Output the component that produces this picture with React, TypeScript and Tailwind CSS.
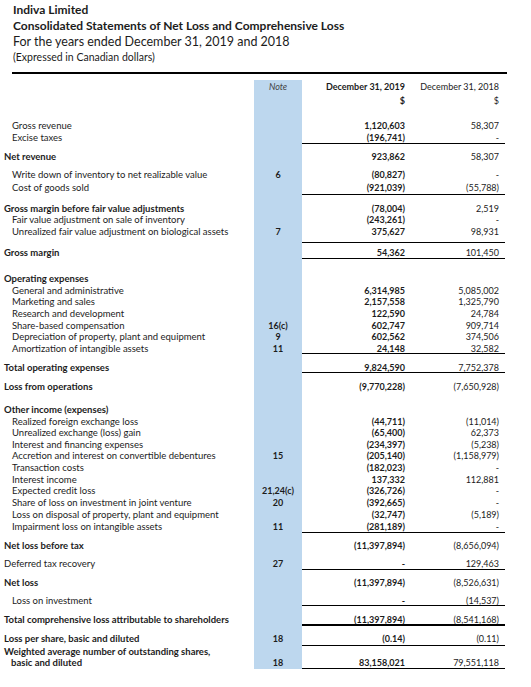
import React from "react";

const BLUE = "bg-[#bdd7ee]";

type RowProps = {
  label?: React.ReactNode;
  note?: string;
  v1?: string;
  v2?: string;
  bold?: boolean;
  sub?: boolean;
  h?: string;
  line?: string;
};

function Row({ label, note, v1, v2, bold, sub, h = "h-[12px]", line = "" }: RowProps) {
  return (
    <div className={`flex ${h}`}>
      <div
        className={`w-[254px] text-[9.5px] leading-[12px] whitespace-nowrap ${bold ? "font-bold pl-[4px]" : ""} ${sub ? "pl-[12px]" : ""}`}
      >
        {label}
      </div>
      <div className={`w-[48px] ${BLUE} text-center font-bold leading-[12px]`}>{note}</div>
      <div className={`flex w-[203px] ${line}`}>
        <div className="w-[103px] text-right font-bold leading-[12px]">{v1}</div>
        <div className="w-[94px] text-right leading-[12px]">{v2}</div>
      </div>
    </div>
  );
}

function Gap({ h }: { h: string }) {
  return (
    <div className={`flex ${h}`}>
      <div className="w-[254px]" />
      <div className={`w-[48px] ${BLUE}`} />
    </div>
  );
}

const L1 = "border-b border-black";
const L2 = "border-b-2 border-black";

export default function App() {
  return (
    <div
      className="w-[531px] h-[687px] bg-white text-[#1c1c1c] overflow-hidden"
      style={{ fontFamily: "Lato, 'Liberation Sans', sans-serif" }}
    >
      <div className="pl-[13px] pt-[2px]">
        <div className="h-[16px] leading-[16px] text-[12px] font-bold">Indiva Limited</div>
        <div className="h-[16px] leading-[16px] text-[12px] font-bold">
          Consolidated Statements of Net Loss and Comprehensive Loss
        </div>
        <div className="h-[16px] leading-[16px] text-[12.5px]">For the years ended December 31, 2019 and 2018</div>
        <div className="h-[14px] leading-[14px] text-[10.5px]">(Expressed in Canadian dollars)</div>
      </div>
      <div className="ml-[12px] mt-[8px] w-[495px] h-[2px] bg-black" />
      <div className="mt-[6px] text-[9px]">
        <div className="flex h-[13px]">
          <div className="w-[254px]" />
          <div className={`w-[48px] ${BLUE} text-center italic text-[#444] leading-[13px]`}>Note</div>
          <div className="flex w-[203px]">
            <div className="w-[103px] text-right font-bold leading-[13px]">December 31, 2019</div>
            <div className="w-[94px] text-right leading-[13px]">December 31, 2018</div>
          </div>
        </div>
        <div className="flex h-[15px]">
          <div className="w-[254px]" />
          <div className={`w-[48px] ${BLUE}`} />
          <div className="flex w-[203px]">
            <div className="w-[103px] text-right font-bold leading-[15px]">$</div>
            <div className="w-[94px] text-right leading-[15px]">$</div>
          </div>
        </div>
        <Gap h="h-[12px]" />
        <Row sub label="Gross revenue" v1="1,120,603" v2="58,307" />
        <Row sub label="Excise taxes" v1="(196,741)" v2="-" line={L1} />
        <Gap h="h-[7px]" />
        <Row bold label="Net revenue" v1="923,862" v2="58,307" />
        <Gap h="h-[6px]" />
        <Row sub label="Write down of inventory to net realizable value" note="6" v1="(80,827)" v2="-" h="h-[13px]" />
        <Row sub label="Cost of goods sold" v1="(921,039)" v2="(55,788)" h="h-[13px]" line={L1} />
        <Gap h="h-[8px]" />
        <Row bold label="Gross margin before fair value adjustments" v1="(78,004)" v2="2,519" h="h-[11px]" />
        <Row sub label="Fair value adjustment on sale of inventory" v1="(243,261)" v2="-" />
        <Row
          sub
          label="Unrealized fair value adjustment on biological assets"
          note="7"
          v1="375,627"
          v2="98,931"
          h="h-[17px]"
          line={L1}
        />
        <Gap h="h-[4px]" />
        <Row bold label="Gross margin" v1="54,362" v2="101,450" line={L1} />
        <Gap h="h-[14px]" />
        <Row bold label="Operating expenses" />
        <Row sub label="General and administrative" v1="6,314,985" v2="5,085,002" h="h-[11px]" />
        <Row sub label="Marketing and sales" v1="2,157,558" v2="1,325,790" />
        <Row sub label="Research and development" v1="122,590" v2="24,784" />
        <Row sub label="Share-based compensation" note="16(c)" v1="602,747" v2="909,714" h="h-[11px]" />
        <Row sub label="Depreciation of property, plant and equipment" note="9" v1="602,562" v2="374,506" />
        <Row sub label="Amortization of intangible assets" note="11" v1="24,148" v2="32,582" h="h-[11px]" line={L1} />
        <Gap h="h-[8px]" />
        <Row bold label="Total operating expenses" v1="9,824,590" v2="7,752,378" h="h-[11px]" line={L1} />
        <Gap h="h-[8px]" />
        <Row bold label="Loss from operations" v1="(9,770,228)" v2="(7,650,928)" />
        <Gap h="h-[11px]" />
        <Row bold label="Other income (expenses)" />
        <Row sub label="Realized foreign exchange loss" v1="(44,711)" v2="(11,014)" h="h-[11px]" />
        <Row sub label="Unrealized exchange (loss) gain" v1="(65,400)" v2="62,373" />
        <Row sub label="Interest and financing expenses" v1="(234,397)" v2="(5,238)" h="h-[11px]" />
        <Row sub label="Accretion and interest on convertible debentures" note="15" v1="(205,140)" v2="(1,158,979)" />
        <Row sub label="Transaction costs" v1="(182,023)" v2="-" />
        <Row sub label="Interest income" v1="137,332" v2="112,881" h="h-[11px]" />
        <Row sub label="Expected credit loss" note="21,24(c)" v1="(326,726)" v2="-" />
        <Row sub label="Share of loss on investment in joint venture" note="20" v1="(392,665)" v2="-" />
        <Row sub label="Loss on disposal of property, plant and equipment" v1="(32,747)" v2="(5,189)" />
        <Row sub label="Impairment loss on intangible assets" note="11" v1="(281,189)" v2="-" line={L1} />
        <Gap h="h-[7px]" />
        <Row bold label="Net loss before tax" v1="(11,397,894)" v2="(8,656,094)" />
        <Gap h="h-[6px]" />
        <Row sub label={<span className="-ml-[8px]">Deferred tax recovery</span>} note="27" v1="-" v2="129,463" line={L1} />
        <Gap h="h-[7px]" />
        <Row bold label="Net loss" v1="(11,397,894)" v2="(8,526,631)" />
        <Gap h="h-[6px]" />
        <Row sub label="Loss on investment" v1="-" v2="(14,537)" h="h-[11px]" line={L1} />
        <Gap h="h-[8px]" />
        <Row
          bold
          label="Total comprehensive loss attributable to shareholders"
          v1="(11,397,894)"
          v2="(8,541,168)"
          line={L2}
        />
        <Gap h="h-[7px]" />
        <Row bold label="Loss per share, basic and diluted" note="18" v1="(0.14)" v2="(0.11)" h="h-[13px]" line={L1} />
        <Row bold label="Weighted average number of outstanding shares," h="h-[11px]" />
        <Row
          bold
          label={<span className="pl-[7px]">basic and diluted</span>}
          note="18"
          v1="83,158,021"
          v2="79,551,118"
          h="h-[12px]"
          line={L1}
        />
      </div>
    </div>
  );
}
